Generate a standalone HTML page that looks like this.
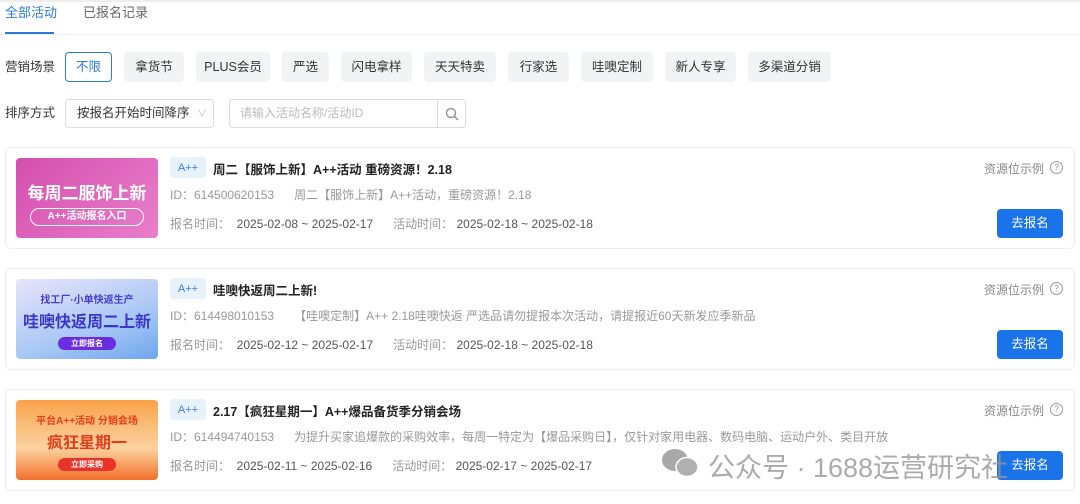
<!DOCTYPE html>
<html><head><meta charset="utf-8"><style>
*{box-sizing:border-box;margin:0;padding:0}
body{width:1080px;height:504px;overflow:hidden;background:#fff;font-family:"Liberation Sans","Noto Sans CJK SC",sans-serif;color:#333;position:relative;font-size:13px}
.abs{position:absolute}
.tab{top:4px;font-size:13px;line-height:18px}
.chip{position:absolute;top:52px;height:30px;line-height:30px;text-align:center;background:#f2f3f5;border-radius:4px;font-size:12.5px;color:#333}
.card{position:absolute;left:5px;width:1070px;height:102px;border:1px solid #ebedf0;border-radius:6px;background:#fff}
.img{position:absolute;left:10px;top:10px;width:142px;height:80px;border-radius:4px;overflow:hidden;text-align:center;color:#fff;font-weight:bold}
.badge{position:absolute;left:164px;top:9px;width:36px;height:21px;background:#e8f2fd;color:#3b82e6;font-size:11px;line-height:13px;padding-top:5px;text-align:center;border-radius:3px}
.title{position:absolute;left:207px;top:11px;font-size:12.5px;font-weight:bold;color:#222}
.id{position:absolute;left:164px;top:38px;font-size:12px;color:#999;white-space:nowrap}
.time{position:absolute;left:164px;top:67px;font-size:12px;color:#555;white-space:nowrap}
.time span{color:#999}
.res{position:absolute;right:30px;top:12px;font-size:12px;color:#888}
.q{position:absolute;right:11px;top:13px;width:13px;height:13px;border:1px solid #999;border-radius:50%;font-size:9px;line-height:11px;text-align:center;color:#999}
.btn{position:absolute;right:11px;top:61px;width:66px;height:29px;background:#1a73e8;color:#fff;border-radius:4px;text-align:center;line-height:29px;font-size:12.5px}
</style></head><body>
<div class="abs" style="left:0;top:0;width:1080px;height:2px;background:#eee"></div>
<div class="abs tab" style="left:5px;color:#2e7bd6">全部活动</div>
<div class="abs tab" style="left:83px;color:#666">已报名记录</div>
<div class="abs" style="left:5px;top:32px;width:49px;height:2px;background:#2e7bd6"></div>
<div class="abs" style="left:0;top:34px;width:1080px;height:1px;background:#f0f0f0"></div>

<div class="abs" style="left:5px;top:58px;font-size:12.5px;line-height:18px">营销场景</div>
<div class="chip" style="left:65px;width:47px;background:#fff;border:1px solid #2e7bd6;color:#2e7bd6;line-height:28px">不限</div>
<div class="chip" style="left:124px;width:60px">拿货节</div>
<div class="chip" style="left:196px;width:74px">PLUS会员</div>
<div class="chip" style="left:282px;width:47px">严选</div>
<div class="chip" style="left:341px;width:71px">闪电拿样</div>
<div class="chip" style="left:424px;width:72px">天天特卖</div>
<div class="chip" style="left:508px;width:61px">行家选</div>
<div class="chip" style="left:581px;width:72px">哇噢定制</div>
<div class="chip" style="left:665px;width:71px">新人专享</div>
<div class="chip" style="left:748px;width:83px">多渠道分销</div>

<div class="abs" style="left:5px;top:104px;font-size:12.5px;line-height:18px">排序方式</div>
<div class="abs" style="left:65px;top:99px;width:149px;height:29px;border:1px solid #ddd;border-radius:4px;padding-left:11px;line-height:27px;font-size:12.5px">按报名开始时间降序 <span style="color:#bbb;font-size:10px;margin-left:4px">∨</span></div>
<div class="abs" style="left:229px;top:99px;width:237px;height:29px;border:1px solid #ddd;border-radius:4px;padding-left:10px;line-height:27px;font-size:12px;color:#bbb">请输入活动名称/活动ID</div>
<div class="abs" style="left:437px;top:100px;width:1px;height:27px;background:#ddd"></div>
<svg class="abs" style="left:444px;top:106px" width="16" height="16" viewBox="0 0 16 16"><circle cx="7" cy="7" r="4.5" fill="none" stroke="#888" stroke-width="1.3"/><path d="M10.3 10.3L14 14" stroke="#888" stroke-width="1.4"/></svg>

<div class="card" style="top:147px">
 <div class="img" style="background:linear-gradient(135deg,#d44fae,#e97fcb)"><div style="font-size:17px;margin-top:21px">每周二服饰上新</div><div style="margin:4px auto 0;width:114px;height:18px;border:1px solid #fff;border-radius:9px;font-size:10px;line-height:16px">A++活动报名入口</div></div>
 <div class="badge">A++</div><div class="title">周二【服饰上新】A++活动 重磅资源！2.18</div>
 <div class="id">ID：614500620153 &nbsp;&nbsp;&nbsp;&nbsp; 周二【服饰上新】A++活动，重磅资源！2.18</div>
 <div class="time"><span>报名时间：</span>&nbsp; 2025-02-08 ~ 2025-02-17 &nbsp;&nbsp;&nbsp;&nbsp;&nbsp;<span>活动时间：</span>&nbsp;2025-02-18 ~ 2025-02-18</div>
 <div class="res">资源位示例</div><div class="q">?</div><div class="btn">去报名</div>
</div>
<div class="card" style="top:268px">
 <div class="img" style="background:linear-gradient(160deg,#e9e4fb,#a8c8f5 60%,#6fa6ee)"><div style="font-size:10px;color:#4a3fd0;margin-top:12px">找工厂·小单快返生产</div><div style="font-size:16px;color:#3b36c8;margin-top:2px">哇噢快返周二上新</div><div style="margin:5px auto 0;width:58px;height:13px;background:#6a2ee0;border-radius:7px;font-size:8px;line-height:13px">立即报名</div></div>
 <div class="badge">A++</div><div class="title">哇噢快返周二上新!</div>
 <div class="id">ID：614498010153 &nbsp;&nbsp;&nbsp;&nbsp; 【哇噢定制】A++ 2.18哇噢快返 严选品请勿提报本次活动，请提报近60天新发应季新品</div>
 <div class="time"><span>报名时间：</span>&nbsp; 2025-02-12 ~ 2025-02-17 &nbsp;&nbsp;&nbsp;&nbsp;&nbsp;<span>活动时间：</span>&nbsp;2025-02-18 ~ 2025-02-18</div>
 <div class="res">资源位示例</div><div class="q">?</div><div class="btn">去报名</div>
</div>
<div class="card" style="top:389px">
 <div class="img" style="background:linear-gradient(180deg,#f9a24a,#fcd3a0 60%,#f36f2a)"><div style="font-size:10px;color:#e43d1a;margin-top:12px">平台A++活动 分销会场</div><div style="font-size:16px;color:#e43d1a;margin-top:2px">疯狂星期一</div><div style="margin:5px auto 0;width:58px;height:13px;background:#e8332a;border-radius:7px;font-size:8px;line-height:13px">立即采购</div></div>
 <div class="badge">A++</div><div class="title">2.17【疯狂星期一】A++爆品备货季分销会场</div>
 <div class="id">ID：614494740153 &nbsp;&nbsp;&nbsp;&nbsp; 为提升买家追爆款的采购效率，每周一特定为【爆品采购日】，仅针对家用电器、数码电脑、运动户外、类目开放</div>
 <div class="time"><span>报名时间：</span>&nbsp; 2025-02-11 ~ 2025-02-16 &nbsp;&nbsp;&nbsp;&nbsp;&nbsp;<span>活动时间：</span>&nbsp;2025-02-17 ~ 2025-02-17</div>
 <div class="res">资源位示例</div><div class="q">?</div><div class="btn">去报名</div>
</div>
<svg class="abs" style="left:660px;top:446px" width="40" height="34" viewBox="0 0 40 34"><ellipse cx="15" cy="14" rx="13" ry="11" fill="#a8a8a8"/><ellipse cx="27" cy="21" rx="11" ry="9.5" fill="#b0b0b0" stroke="#fff" stroke-width="1.5"/></svg>
<div class="abs" style="left:708px;top:446px;font-size:27px;color:rgba(150,150,150,.8);white-space:nowrap">公众号 · 1688运营研究社</div>
</body></html>
